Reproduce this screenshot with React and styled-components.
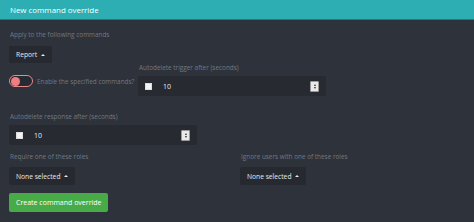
import React, { useState } from 'react'
import styled, { createGlobalStyle } from 'styled-components'

const GlobalStyle = createGlobalStyle`
  html, body {
    margin: 0;
    padding: 0;
    background: #2e323b;
  }
  body {
    font-family: "Open Sans", "Noto Sans", sans-serif;
  }
`

const Modal = styled.div`
  width: 474px;
  height: 222px;
  background: #2e323b;
  overflow: hidden;
`
const Header = styled.div`
  height: 19px;
  background: #2caeb2;
  border-bottom: 1px solid #1f7d80;
  display: flex;
  align-items: center;
  padding-left: 10px;
`
const Title = styled.h1`
  margin: 0;
  font-size: 7.9px;
  font-weight: 400;
  color: #ffffff;
`
const Body = styled.div`
  padding: 10px 10px 0 9px;
`
const Label = styled.div`
  font-size: 6.4px;
  line-height: 10px;
  color: #737882;
  padding-left: 1px;
  white-space: nowrap;
`
const Row = styled.div`
  display: flex;
  margin-top: ${props => props.mt || 0}px;
`
const Col = styled.div`
  width: ${props => props.w ? props.w + 'px' : 'auto'};
  flex-shrink: 0;
  padding-top: ${props => props.pt || 0}px;
  display: flex;
  flex-direction: column;
`
const DropButton = styled.button`
  margin-top: ${props => props.mt || 0}px;
  align-self: flex-start;
  height: ${props => props.h || 18}px;
  padding: 0 7px;
  background: #262930;
  border: none;
  border-radius: 2px;
  color: #e8e9eb;
  font-family: inherit;
  font-size: 6.7px;
  display: flex;
  align-items: center;
  gap: 4px;
`
const Caret = styled.span`
  width: 0;
  height: 0;
  border-left: 2px solid transparent;
  border-right: 2px solid transparent;
  border-bottom: 2px solid #e8e9eb;
`
const ToggleRow = styled.div`
  display: flex;
  align-items: center;
  gap: 4px;
`
const Toggle = styled.div`
  flex-shrink: 0;
  width: 24px;
  height: 12px;
  box-sizing: border-box;
  border: 1.5px solid #e58a8a;
  border-radius: 7px;
  background: #272a31;
  display: flex;
  align-items: center;
  padding-left: 0.5px;
`
const Knob = styled.div`
  width: 9px;
  height: 9px;
  border-radius: 50%;
  background: #f07d80;
`
const ToggleLabel = styled.span`
  font-size: 6.4px;
  color: #737882;
  white-space: nowrap;
`
const NumberBox = styled.div`
  margin-top: 3px;
  width: ${props => props.w}px;
  height: 20px;
  background: #272a31;
  border-radius: 2px;
  display: flex;
  align-items: center;
  padding: 0 7px;
  box-sizing: border-box;
`
const Check = styled.div`
  width: 5px;
  height: 5px;
  background: #f4f4f4;
  border: 0.5px solid #ddd;
`
const Value = styled.span`
  margin-left: 11px;
  font-size: 7px;
  color: #e8e9eb;
  flex: 1;
`
const Spinner = styled.div`
  width: 7px;
  height: 9px;
  background: #e9e9e9;
  border: 1px solid #9a9a9a;
  border-radius: 1px;
  display: flex;
  flex-direction: column;
  align-items: center;
  justify-content: center;
  gap: 1px;
`
const Arrow = styled.span`
  width: 0;
  height: 0;
  border-left: 1.5px solid transparent;
  border-right: 1.5px solid transparent;
  ${props => props.up ? 'border-bottom: 2px solid #333;' : 'border-top: 2px solid #333;'}
`
const CreateButton = styled.button`
  margin-top: 8px;
  height: 19px;
  padding: 0 7px;
  background: #47ac47;
  border: none;
  border-radius: 2px;
  color: #ffffff;
  font-family: inherit;
  font-size: 7px;
`

const NumberInput = ({ w, value }) => (
  <NumberBox w={w}>
    <Check />
    <Value>{value}</Value>
    <Spinner>
      <Arrow up />
      <Arrow />
    </Spinner>
  </NumberBox>
)

const App = () => {
  const [trigger] = useState(10)
  const [response] = useState(10)

  return (
    <Modal>
      <GlobalStyle />
      <Header>
        <Title>New command override</Title>
      </Header>
      <Body>
        <Label>Apply to the following commands</Label>
        <DropButton mt={6} h={17}>Report <Caret /></DropButton>
        <Row>
          <Col w={129} pt={12}>
            <ToggleRow>
              <Toggle><Knob /></Toggle>
              <ToggleLabel>Enable the specified commands?</ToggleLabel>
            </ToggleRow>
          </Col>
          <Col>
            <Label>Autodelete trigger after (seconds)</Label>
            <NumberInput w={188} value={trigger} />
          </Col>
        </Row>
        <Row mt={16}>
          <Col>
            <Label>Autodelete response after (seconds)</Label>
            <NumberInput w={188} value={response} />
          </Col>
        </Row>
        <Row mt={7}>
          <Col w={231}>
            <Label>Require one of these roles</Label>
            <DropButton mt={5}>None selected <Caret /></DropButton>
          </Col>
          <Col>
            <Label>Ignore users with one of these roles</Label>
            <DropButton mt={5}>None selected <Caret /></DropButton>
          </Col>
        </Row>
        <CreateButton>Create command override</CreateButton>
      </Body>
    </Modal>
  )
}

export default App
